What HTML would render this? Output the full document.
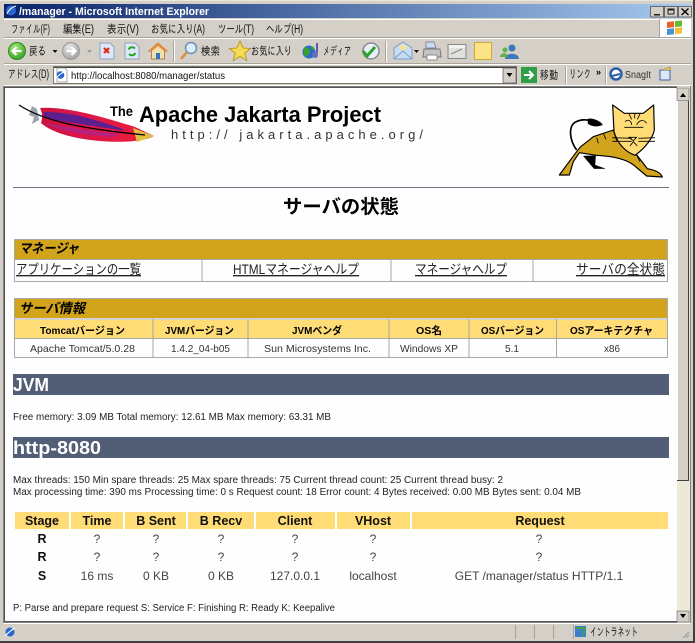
<!DOCTYPE html>
<html><head><meta charset="utf-8"><title>/manager - Microsoft Internet Explorer</title>
<style>
html,body{margin:0;padding:0;width:695px;height:643px;overflow:hidden;background:#d4d0c8}
svg{display:block;filter:blur(.25px)}
text{font-family:"Liberation Sans","Noto Sans CJK JP",sans-serif;fill:#222}
.u{font-family:"Liberation Sans","IPAGothic","Noto Sans CJK JP",sans-serif;font-size:11.500px;fill:#111}
.sec{font-weight:bold;font-style:italic;font-size:13.500px;fill:#000}
.th{font-weight:bold;font-size:10.500px;fill:#000}
.td{font-size:10.500px;fill:#333}
.h2{font-weight:bold;font-size:18px;fill:#fff}
.p{font-size:10px;fill:#222}
.st{font-weight:bold;font-size:12.500px;fill:#111}
.c{font-weight:normal;font-size:12px;fill:#444}
.l{font-size:13.500px;fill:#222;text-decoration:underline}
</style></head><body>
<svg width="695" height="643" viewBox="0 0 695 643" xmlns="http://www.w3.org/2000/svg">
<defs>
<linearGradient id="tb" x1="0" x2="1" y1="0" y2="0"><stop offset="0" stop-color="#0a246a"/><stop offset="1" stop-color="#a6caf0"/></linearGradient>
<radialGradient id="gr" cx=".4" cy=".3" r=".8"><stop offset="0" stop-color="#a8e878"/><stop offset="1" stop-color="#2a9a20"/></radialGradient>
<radialGradient id="gy" cx=".4" cy=".3" r=".8"><stop offset="0" stop-color="#e8e8e8"/><stop offset="1" stop-color="#9a9a9a"/></radialGradient>
<linearGradient id="fe" x1="0" x2="1" y1="0" y2="0"><stop offset="0" stop-color="#c8143c"/><stop offset=".3" stop-color="#d8154c"/><stop offset=".8" stop-color="#e81c3c"/><stop offset="1" stop-color="#e81c3c"/></linearGradient>
</defs>
<rect width="695" height="643" fill="#d4d0c8"/>
<rect x="0" y="0" width="695" height="1" fill="#ece9d8"/>
<rect x="0" y="641" width="695" height="2" fill="#404040"/>
<rect x="693" y="0" width="2" height="643" fill="#404040"/>
<!-- title -->
<rect x="4" y="4" width="687" height="14" fill="url(#tb)"/>
<circle cx="11" cy="10.500" r="5" fill="#2a66d0"/><path d="M7 14C9 9 12 7 16 6" stroke="#fff" fill="none"/>
<text x="19" y="15" font-size="11" font-weight="bold" style="fill:#fff" textLength="190" lengthAdjust="spacingAndGlyphs">/manager - Microsoft Internet Explorer</text>
<g fill="#d4d0c8" stroke="#404040" stroke-width=".7"><rect x="650.500" y="6.500" width="13" height="10.500"/><rect x="664.500" y="6.500" width="13" height="10.500"/><rect x="678.500" y="6.500" width="13" height="10.500"/></g>
<path d="M654 14h6v1.500h-6zM667.500 8.500h7v6h-7z" fill="#000" fill-opacity=".85"/><rect x="668.500" y="10.500" width="5" height="3" fill="#d4d0c8"/>
<path d="M681.500 8.500l7 6.500M688.500 8.500l-7 6.500" stroke="#000" stroke-width="1.400"/>
<!-- menu -->
<rect x="4" y="19" width="687" height="1" fill="#fff"/>
<rect x="4" y="38" width="687" height="1" fill="#fff"/><rect x="4" y="37" width="687" height="1" fill="#a8a49c"/>
<text class="u" x="11" y="33" textLength="39" lengthAdjust="spacingAndGlyphs">ファイル(F)</text>
<text class="u" x="63" y="33" textLength="31" lengthAdjust="spacingAndGlyphs">編集(E)</text>
<text class="u" x="107" y="33" textLength="32" lengthAdjust="spacingAndGlyphs">表示(V)</text>
<text class="u" x="151" y="33" textLength="54" lengthAdjust="spacingAndGlyphs">お気に入り(A)</text>
<text class="u" x="218" y="33" textLength="36" lengthAdjust="spacingAndGlyphs">ツール(T)</text>
<text class="u" x="266" y="33" textLength="37" lengthAdjust="spacingAndGlyphs">ヘルプ(H)</text>
<rect x="659" y="19" width="32" height="18" fill="#fff"/><rect x="659" y="19" width="1" height="19" fill="#a8a49c"/>
<g transform="translate(667,22) skewY(-6)"><rect width="7" height="6" fill="#e8602c"/><rect x="8" width="7" height="6" fill="#6cb830"/><rect y="7" width="7" height="6" fill="#4a90d8"/><rect x="8" y="7" width="7" height="6" fill="#f0c030"/></g>
<!-- toolbar -->
<circle cx="17" cy="51" r="8.500" fill="url(#gr)" stroke="#2a8a20"/><path d="M21.500 51h-8M16.500 47l-4 4 4 4" stroke="#fff" stroke-width="2.200" fill="none"/>
<text class="u" x="29" y="55" textLength="17" lengthAdjust="spacingAndGlyphs">戻る</text><path d="M52.500 50h5l-2.500 3z" fill="#111"/>
<circle cx="71" cy="51" r="8.500" fill="url(#gy)" stroke="#999"/><path d="M66.500 51h8M71.500 47l4 4-4 4" stroke="#fff" stroke-width="2.200" fill="none"/>
<path d="M87 50h5l-2.500 3z" fill="#999"/>
<path d="M100 43h10l4 4v12h-14z" fill="#dfe8f6" stroke="#8ea2c4"/><path d="M104 48l5 5M109 48l-5 5" stroke="#e02818" stroke-width="2.200"/>
<path d="M125 43h10l4 4v12h-14z" fill="#dfe8f6" stroke="#8ea2c4"/><path d="M135 48.500a4 4 0 0 0-6.500 1M129 54a4 4 0 0 0 6.500-1" stroke="#28a828" stroke-width="2" fill="none"/>
<path d="M149 51l9-8 9 8h-2.500v8h-13v-8z" fill="#f0e0b0" stroke="#b08050"/><path d="M149 51l9-8 9 8-3 0-6-5-6 5z" fill="#e88a30"/><rect x="156" y="53" width="4" height="6" fill="#3a70c0"/>
<rect x="173" y="41" width="1" height="21" fill="#a8a49c"/><rect x="174" y="41" width="1" height="21" fill="#fff"/>
<circle cx="191" cy="48" r="5.500" fill="#dcecfa" stroke="#6c90b8" stroke-width="1.500"/><path d="M187 52l-6 7" stroke="#d89040" stroke-width="2.500"/>
<text class="u" x="201" y="55" textLength="19" lengthAdjust="spacingAndGlyphs">検索</text>
<path d="M240 41l3 7 7.500.5-5.700 4.700 1.900 7.300-6.700-4-6.700 4 1.900-7.300-5.700-4.700 7.500-.5z" fill="#f8dc50" stroke="#b89830"/>
<text class="u" x="251" y="55" textLength="41" lengthAdjust="spacingAndGlyphs">お気に入り</text>
<circle cx="309" cy="52" r="6.500" fill="#2a6ac8"/><path d="M304 48c3-2 5 0 6 3s-3 3-3 6c-3-1-4-5-3-9zM311 46c2 0 3 2 4 4-2 1-4-1-4-4z" fill="#38a030"/><path d="M317 43v10" stroke="#5a5ab0" stroke-width="2"/><circle cx="315" cy="55" r="3" fill="#6a6ac0"/>
<text class="u" x="323" y="55" textLength="28" lengthAdjust="spacingAndGlyphs">メディア</text>
<circle cx="371" cy="51" r="8" fill="#e8f0f8" stroke="#8a8a90" stroke-width="1.500"/><path d="M363 51l4 5 8-9" stroke="#30a030" stroke-width="3" fill="none"/>
<rect x="385" y="41" width="1" height="21" fill="#a8a49c"/><rect x="386" y="41" width="1" height="21" fill="#fff"/>
<path d="M394 48l9-6 9 6v11h-18z" fill="#c8dcf4" stroke="#7a9cc8"/><path d="M398 47l5-3 5 3-5 4z" fill="#f4e0a0"/><path d="M394 59l9-8 9 8" fill="none" stroke="#7a9cc8"/>
<path d="M414 50h5l-2.500 3z" fill="#111"/>
<path d="M426 42h8l2 6h-10z" fill="#c8dcf0" stroke="#88a"/><path d="M424 49h16l1 8h-18z" fill="#c4c4c4" stroke="#777"/><rect x="427" y="55" width="10" height="5" fill="#fff" stroke="#888"/>
<rect x="448" y="44.500" width="18" height="14" fill="#e0e0dc" stroke="#888"/><path d="M451 54l11-5" stroke="#888"/><rect x="449" y="45" width="16" height="3" fill="#f4f4f0"/>
<rect x="474.500" y="42.500" width="17" height="17" rx="1" fill="#fbe488" stroke="#d0a830"/>
<circle cx="512" cy="48" r="3.500" fill="#3a78c0"/><path d="M505 59c0-7 14-7 14 0z" fill="#3a78c0"/><circle cx="505" cy="50" r="2.500" fill="#60b050"/><path d="M500 57c0-5 8-5 8 0z" fill="#60b050"/>
<!-- address -->
<rect x="4" y="63" width="687" height="1" fill="#a8a49c"/><rect x="4" y="64" width="687" height="1" fill="#fff"/>
<text class="u" x="8" y="78" textLength="41" lengthAdjust="spacingAndGlyphs">アドレス(D)</text>
<rect x="53.500" y="66.500" width="463" height="17" fill="#fff" stroke="#7a7870"/><rect x="54" y="67" width="462" height="1" fill="#404040"/>
<path d="M57 68h8l2 2v12h-10z" fill="#fff" stroke="#888" stroke-width=".7"/><circle cx="60.500" cy="75" r="3.800" fill="#2a66d0"/><path d="M56 78c3-3 5-5 8-6" stroke="#fff" fill="none"/>
<text x="71" y="79" font-size="10.500" style="fill:#111" textLength="154" lengthAdjust="spacingAndGlyphs">http://localhost:8080/manager/status</text>
<rect x="503" y="68" width="13" height="15" fill="#d4d0c8" stroke="#555" stroke-width=".7"/><path d="M506.500 73h6l-3 4z" fill="#000"/>
<rect x="521" y="67" width="16" height="16" fill="#2e9e48"/><path d="M524 75h9M529 71l4 4-4 4" stroke="#fff" stroke-width="2" fill="none"/>
<text class="u" x="540" y="79" textLength="18" lengthAdjust="spacingAndGlyphs">移動</text>
<rect x="565" y="66" width="1" height="18" fill="#a8a49c"/><rect x="566" y="66" width="1" height="18" fill="#fff"/>
<text class="u" x="569" y="78" textLength="22" lengthAdjust="spacingAndGlyphs">リンク</text>
<text x="596" y="75" font-size="9" font-weight="bold" style="fill:#000">»</text>
<rect x="605" y="66" width="1" height="18" fill="#a8a49c"/><rect x="606" y="66" width="1" height="18" fill="#fff"/>
<circle cx="616" cy="74" r="5.500" fill="#fff" stroke="#2a60a8" stroke-width="2.500"/><path d="M612 76l8-2" stroke="#2a60a8" stroke-width="2"/>
<text x="625" y="78" font-size="10" style="fill:#333" textLength="26" lengthAdjust="spacingAndGlyphs">SnagIt</text>
<rect x="660" y="70" width="10" height="10" fill="#dce8f8" stroke="#3a60a8"/><path d="M662 70l8-3 1 3" fill="#e8c050" stroke="#a08030" stroke-width=".6"/>
<rect x="4" y="85" width="687" height="1" fill="#fff"/>
<!-- page frame -->
<rect x="3" y="86" width="674" height="537" fill="#808080"/>
<rect x="4" y="87" width="673" height="535" fill="#555"/>
<rect x="5" y="88" width="672" height="533" fill="#fefefe"/>
<!-- scrollbar -->
<rect x="677" y="87" width="14" height="535" fill="#ece9d8"/><rect x="690" y="86" width="1" height="537" fill="#808080"/>
<rect x="677" y="88" width="12" height="12.500" fill="#d4d0c8" stroke="#555" stroke-width=".5"/><path d="M680 97h6l-3-4z" fill="#000"/>
<rect x="677" y="101" width="12" height="380" fill="#d4d0c8"/><rect x="677" y="101" width="1" height="380" fill="#fff"/><rect x="688" y="101" width="1" height="380" fill="#404040"/><rect x="677" y="480" width="12" height="1" fill="#404040"/>
<rect x="677" y="611" width="12" height="11" fill="#d4d0c8" stroke="#555" stroke-width=".5"/><path d="M680 614h6l-3 4z" fill="#000"/>
<!-- status -->
<rect x="4" y="623" width="687" height="1" fill="#fff"/>
<circle cx="10" cy="632" r="4.500" fill="#2a66d0"/><path d="M5 636c3-3 6-6 10-8" stroke="#fff" fill="none"/>
<g fill="#a8a49c"><rect x="515" y="625" width="1" height="14"/><rect x="534" y="625" width="1" height="14"/><rect x="553" y="625" width="1" height="14"/><rect x="573" y="625" width="1" height="14"/></g>
<rect x="575" y="626" width="11" height="11" fill="#3a80c8"/><path d="M576 628h9l-2 8" stroke="#40a050" fill="none" stroke-width="2"/>
<text class="u" x="590" y="636" textLength="48" lengthAdjust="spacingAndGlyphs">イントラネット</text>
<path d="M683 638l6-6M686 638l3-3" stroke="#999"/>
<!-- feather -->
<path d="M40 108C60 106 95 114 135 127L154 136C145 141 125 143 100 141C75 139 52 133 41 123C43 117 42 112 40 108z" fill="url(#fe)"/>
<path d="M43 112C70 112 90 118 120 128L125 131C95 126 65 122 45 118z" fill="#5a2090"/>
<path d="M44 123C70 128 100 132 120 134L112 137C85 135 60 131 44 123z" fill="#b8207c"/>
<path d="M133 128L154 136L137 142z" fill="#e0c040"/>
<path d="M32 106l5 3 2 11-7 4 2-7-5-2z" fill="#9aa4ac"/>
<path d="M19 105C45 122 85 129 145 135" stroke="#000" stroke-width="1.300" fill="none"/>
<!-- logo text -->
<text x="110" y="116" font-size="13.500" font-weight="bold" style="fill:#000" textLength="23" lengthAdjust="spacingAndGlyphs">The</text>
<text x="139" y="122" font-size="22" font-weight="bold" style="fill:#000" textLength="242" lengthAdjust="spacingAndGlyphs">Apache Jakarta Project</text>
<text x="171" y="139" font-size="13" style="fill:#333" textLength="252">http:// jakarta.apache.org/</text>
<!-- tomcat -->
<g transform="translate(530,90) scale(.3333)" stroke="#000" stroke-width="3.500" stroke-linejoin="round">
<path d="M140 180C118 150 115 110 135 97C150 88 170 88 180 92" fill="none" stroke-width="5"/>
<path d="M175 88C190 85 210 95 216 104C205 110 185 108 175 100z" fill="#000"/>
<path d="M250 120L190 140L150 172L125 205L88 255L118 255L130 215L148 188L200 196C240 198 285 205 312 226L350 258L397 261C392 248 375 240 352 236L318 192L260 150z" fill="#d2a41c"/>
<path d="M160 198L197 197L195 225L225 236L192 236z" fill="#000" stroke-width="1"/>
<path d="M248 45L283 70L340 70L371 45L373 120C368 145 345 175 315 196C285 185 262 160 252 125z" fill="#ffdc75"/>
<g fill="none" stroke-width="2.500"><path d="M283 112L340 112M247 143L305 145M247 154L305 154M325 145L375 143M325 154L375 154M296 142L320 142L310 152zM300 168L310 155L322 168M285 95C295 85 305 95 305 105M320 105C325 92 340 85 350 100M297 72L305 88M315 70L313 85M330 72L322 88M200 143L205 160M220 130L228 148M320 195L330 215"/></g>
</g>
<!-- hr / heading -->
<rect x="13" y="187" width="656" height="1" fill="#6d7583"/>
<text x="283" y="213" font-size="19" font-weight="bold" style="fill:#000" textLength="116" lengthAdjust="spacingAndGlyphs">サーバの状態</text>
<!-- manager table -->
<g fill="none" stroke="#a8a8a8"><rect x="14.500" y="239.500" width="653" height="42"/><path d="M14 259.500H668M202 260V282M391 260V282M533 260V282"/></g>
<rect x="15" y="240" width="652" height="19" fill="#d2a41c"/>
<text class="sec" x="19" y="253" textLength="60" lengthAdjust="spacingAndGlyphs">マネージャ</text>
<text class="l" x="16" y="274" textLength="125" lengthAdjust="spacingAndGlyphs">アプリケーションの一覧</text>
<text class="l" x="233" y="274" textLength="126" lengthAdjust="spacingAndGlyphs">HTMLマネージャヘルプ</text>
<text class="l" x="415" y="274" textLength="92" lengthAdjust="spacingAndGlyphs">マネージャヘルプ</text>
<text class="l" x="576" y="274" textLength="89" lengthAdjust="spacingAndGlyphs">サーバの全状態</text>
<!-- server table -->
<rect x="15" y="299" width="652" height="19" fill="#d2a41c"/>
<rect x="15" y="320" width="652" height="18" fill="#ffdc75"/>
<g fill="none" stroke="#a8a8a8"><rect x="14.500" y="298.500" width="653" height="59"/><path d="M14 319H668M14 338.500H668M153 319V358M248 319V358M389 319V358M469 319V358M556.500 319V358"/></g>
<text class="sec" x="19" y="313" textLength="66" lengthAdjust="spacingAndGlyphs">サーバ情報</text>
<text class="th" x="40" y="334" textLength="85" lengthAdjust="spacingAndGlyphs">Tomcatバージョン</text>
<text class="th" x="165" y="334" textLength="69" lengthAdjust="spacingAndGlyphs">JVMバージョン</text>
<text class="th" x="292" y="334" textLength="50" lengthAdjust="spacingAndGlyphs">JVMベンダ</text>
<text class="th" x="416" y="334" textLength="26" lengthAdjust="spacingAndGlyphs">OS名</text>
<text class="th" x="481" y="334" textLength="63" lengthAdjust="spacingAndGlyphs">OSバージョン</text>
<text class="th" x="570" y="334" textLength="83" lengthAdjust="spacingAndGlyphs">OSアーキテクチャ</text>
<text class="td" x="30" y="352" textLength="105" lengthAdjust="spacingAndGlyphs">Apache Tomcat/5.0.28</text>
<text class="td" x="171" y="352" textLength="59" lengthAdjust="spacingAndGlyphs">1.4.2_04-b05</text>
<text class="td" x="264" y="352" textLength="107" lengthAdjust="spacingAndGlyphs">Sun Microsystems Inc.</text>
<text class="td" x="400" y="352" textLength="58" lengthAdjust="spacingAndGlyphs">Windows XP</text>
<text class="td" x="505" y="352" textLength="14" lengthAdjust="spacingAndGlyphs">5.1</text>
<text class="td" x="604" y="352" textLength="16" lengthAdjust="spacingAndGlyphs">x86</text>
<!-- JVM -->
<rect x="13" y="374" width="656" height="21" fill="#525d76"/>
<text class="h2" x="13" y="391" textLength="36" lengthAdjust="spacingAndGlyphs">JVM</text>
<text class="p" x="13" y="420" textLength="318" lengthAdjust="spacingAndGlyphs">Free memory: 3.09 MB Total memory: 12.61 MB Max memory: 63.31 MB</text>
<!-- http -->
<rect x="13" y="437" width="656" height="21" fill="#525d76"/>
<text class="h2" x="13" y="454" textLength="88" lengthAdjust="spacingAndGlyphs">http-8080</text>
<text class="p" x="13" y="483" textLength="490" lengthAdjust="spacingAndGlyphs">Max threads: 150 Min spare threads: 25 Max spare threads: 75 Current thread count: 25 Current thread busy: 2</text>
<text class="p" x="13" y="495" textLength="568" lengthAdjust="spacingAndGlyphs">Max processing time: 390 ms Processing time: 0 s Request count: 18 Error count: 4 Bytes received: 0.00 MB Bytes sent: 0.04 MB</text>
<!-- stage table -->
<g fill="#ffdc75"><rect x="15" y="512" width="54" height="17"/><rect x="71" y="512" width="52" height="17"/><rect x="125" y="512" width="61" height="17"/><rect x="188" y="512" width="66" height="17"/><rect x="256" y="512" width="79" height="17"/><rect x="337" y="512" width="73" height="17"/><rect x="412" y="512" width="256" height="17"/></g>
<g text-anchor="middle">
<text class="st" x="42" y="525">Stage</text><text class="st" x="97" y="525">Time</text><text class="st" x="156" y="525">B Sent</text><text class="st" x="221" y="525">B Recv</text><text class="st" x="295" y="525">Client</text><text class="st" x="373" y="525">VHost</text><text class="st" x="540" y="525">Request</text>
<text class="st" x="42" y="543">R</text><text class="st" x="42" y="561">R</text><text class="st" x="42" y="580">S</text>
<text class="c" x="97" y="543">?</text><text class="c" x="156" y="543">?</text><text class="c" x="221" y="543">?</text><text class="c" x="295" y="543">?</text><text class="c" x="373" y="543">?</text><text class="c" x="539" y="543">?</text>
<text class="c" x="97" y="561">?</text><text class="c" x="156" y="561">?</text><text class="c" x="221" y="561">?</text><text class="c" x="295" y="561">?</text><text class="c" x="373" y="561">?</text><text class="c" x="539" y="561">?</text>
<text class="c" x="97" y="580">16 ms</text><text class="c" x="156" y="580">0 KB</text><text class="c" x="221" y="580">0 KB</text><text class="c" x="295" y="580">127.0.0.1</text><text class="c" x="373" y="580">localhost</text><text class="c" x="539" y="580">GET /manager/status HTTP/1.1</text>
</g>
<text class="p" x="13" y="611" textLength="322" lengthAdjust="spacingAndGlyphs">P: Parse and prepare request S: Service F: Finishing R: Ready K: Keepalive</text>
</svg>
</body></html>
